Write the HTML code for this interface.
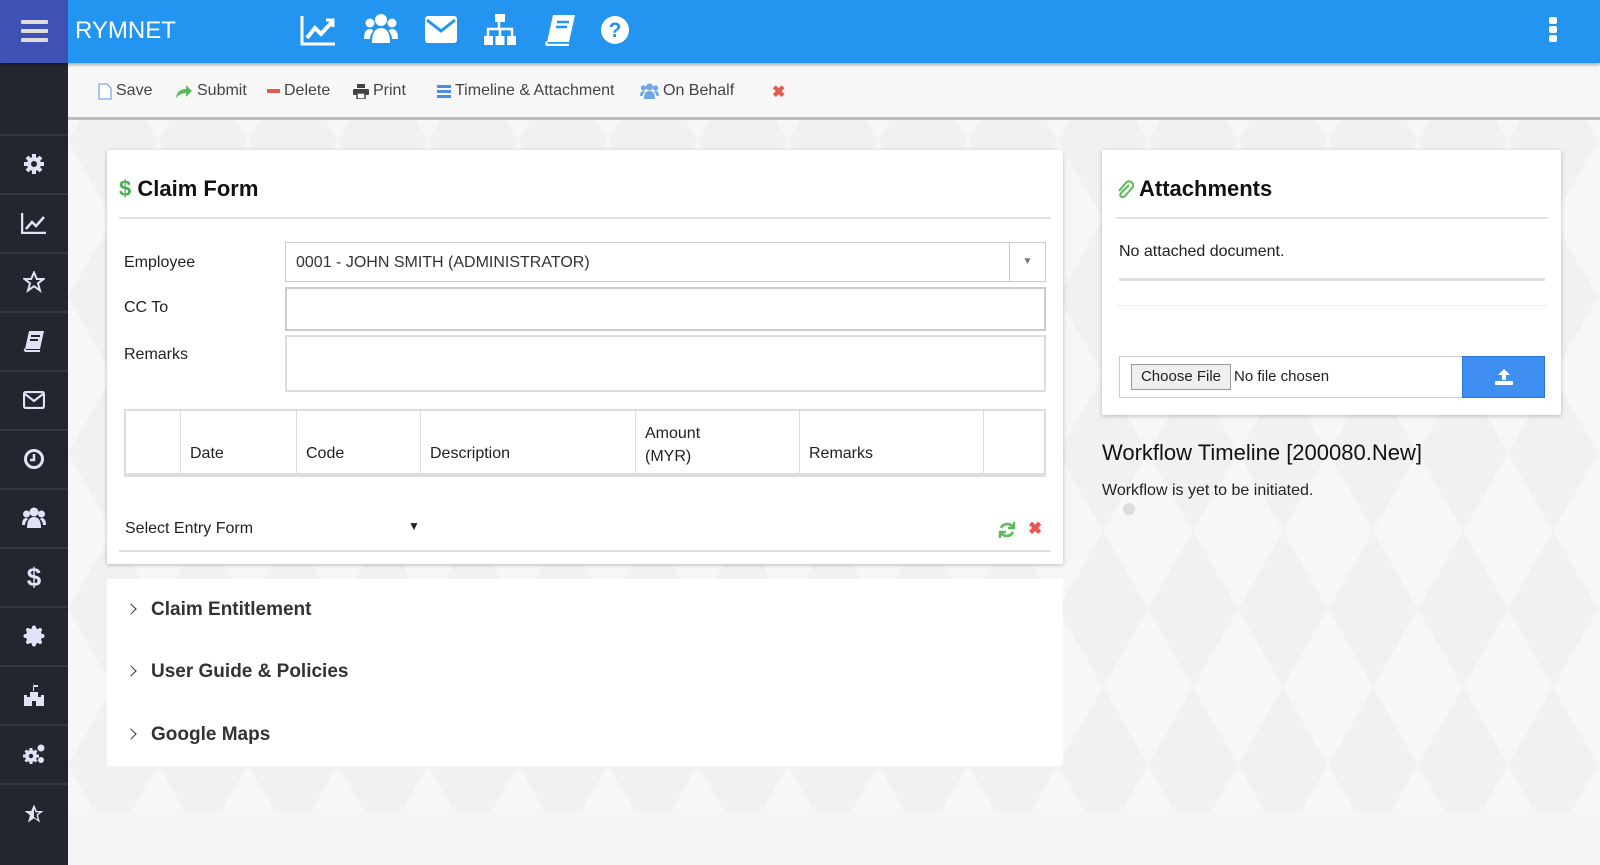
<!DOCTYPE html>
<html><head><meta charset="utf-8"><style>
*{box-sizing:border-box;margin:0;padding:0}
body{width:1600px;height:865px;overflow:hidden;background:#f5f5f5;font-family:"Liberation Sans",Arial,sans-serif;color:#222;position:relative}
.abs{position:absolute}
#hdr{left:0;top:0;width:1600px;height:63px;background:#2394ef;box-shadow:0 2px 3px rgba(0,0,0,.3);z-index:3}
#burger{left:0;top:0;width:68px;height:63px;background:#3f51b5}
#side{left:0;top:63px;width:68px;height:802px;background:#23262e;z-index:2}
.sitem{position:absolute;left:0;width:68px;height:58px;border-top:2px solid #33373f;display:flex;align-items:center;justify-content:center}
#bg{left:68px;top:63px;width:1532px;height:748px;background:#f1f1f1;
background-image:linear-gradient(60deg,rgba(255,255,255,.45) 25%,transparent 25%,transparent 75%,rgba(255,255,255,.45) 75%),linear-gradient(-60deg,rgba(255,255,255,.45) 25%,transparent 25%,transparent 75%,rgba(255,255,255,.45) 75%);background-size:90px 156px}
#tb{left:68px;top:63px;width:1532px;height:57px;background:#f7f7f7;border-bottom:3px solid #bdbdbd;font-size:16px;color:#444}
.tbi{position:absolute;top:19px;display:flex;align-items:center;gap:4px}
.card{background:#fff;box-shadow:0 1px 4px rgba(0,0,0,.25);border-radius:2px}
.lbl{position:absolute;font-size:16px;color:#222}
.inp{position:absolute;border:1px solid #ccc;background:#fff}
.chev{display:inline-block;width:8px;height:8px;border-right:1.5px solid #333;border-top:1.5px solid #333;transform:rotate(45deg);margin-right:16px;position:relative;top:-2px}
</style></head><body>
<div id="bg" class="abs"></div>
<div id="hdr" class="abs">
 <div id="burger" class="abs"><svg class="abs" style="left:21px;top:20px" width="27" height="22"><rect y="0" width="27" height="4" rx="1" fill="#ddd"/><rect y="9" width="27" height="4" rx="1" fill="#ddd"/><rect y="18" width="27" height="4" rx="1" fill="#ddd"/></svg></div>
 <div class="abs" style="left:75px;top:17px;font-size:24px;color:#fff">RYMNET</div>
 <svg class="abs" style="left:300px;top:14px" width="36" height="32" fill="none" stroke="#fff" stroke-width="3"><path d="M2 2V30H35"/><path d="M7 24L15 14L21 20L32 8" stroke-width="4"/><path d="M26 6H33V13" /></svg>
 <svg class="abs" style="left:364px;top:13px" width="34" height="32" fill="#fff"><circle cx="17" cy="7" r="6"/><circle cx="6" cy="10" r="4.5"/><circle cx="28" cy="10" r="4.5"/><path d="M8 30Q8 15 17 15Q26 15 26 30Z"/><path d="M0 26Q0 16 6 16Q9 16 9 18Q6 22 6 26Z"/><path d="M34 26Q34 16 28 16Q25 16 25 18Q28 22 28 26Z"/></svg>
 <svg class="abs" style="left:425px;top:16px" width="32" height="27"><rect width="32" height="27" rx="3" fill="#fff"/><path d="M2 4L16 15L30 4" fill="none" stroke="#2394ef" stroke-width="3"/></svg>
 <svg class="abs" style="left:484px;top:14px" width="32" height="32" fill="#fff"><rect x="11" y="0" width="10" height="8"/><rect x="0" y="22" width="9" height="9"/><rect x="11.5" y="22" width="9" height="9"/><rect x="23" y="22" width="9" height="9"/><path d="M15 8V15M4 22V15H28V22M16 15V22" stroke="#fff" stroke-width="2.5" fill="none"/></svg>
 <svg class="abs" style="left:544px;top:14px" width="32" height="32"><path d="M9 1H31L25 28H3Z" fill="#fff"/><path d="M3 28Q1 31 5 31H25" stroke="#fff" stroke-width="2.5" fill="none"/><path d="M13 8H25M12 13H23" stroke="#2394ef" stroke-width="2.5"/></svg>
 <svg class="abs" style="left:600px;top:15px" width="30" height="30"><circle cx="15" cy="15" r="14" fill="#fff"/><text x="15" y="22" text-anchor="middle" font-size="21" font-weight="bold" fill="#2394ef" font-family="Liberation Sans">?</text></svg>
 <svg class="abs" style="left:1549px;top:17px" width="9" height="26" fill="#fff"><rect y="0" width="8" height="7" rx="2"/><rect y="9" width="8" height="7" rx="2"/><rect y="18" width="8" height="7" rx="2"/></svg>
</div>
<div id="side" class="abs">
 <div class="sitem" style="top:71px"><svg width="22" height="22"><circle cx="11" cy="11" r="7" fill="#dfe3f5"/><g stroke="#dfe3f5" stroke-width="4"><path d="M11 1V21M1 11H21M4 4L18 18M18 4L4 18"/></g><circle cx="11" cy="11" r="3" fill="#23262e"/></svg></div>
 <div class="sitem" style="top:130px"><svg width="26" height="22" fill="none" stroke="#dfe3f5" stroke-width="2.5"><path d="M1 1V21H25"/><path d="M5 17L11 10L15 14L23 5"/></svg></div>
 <div class="sitem" style="top:189px"><svg width="22" height="22"><path d="M11 1.5L13.8 8H20.5L15 12.3L17 19.5L11 15.2L5 19.5L7 12.3L1.5 8H8.2Z" fill="none" stroke="#dfe3f5" stroke-width="2"/></svg></div>
 <div class="sitem" style="top:248px"><svg width="22" height="22"><path d="M6 1H21L17 19H2Z" fill="#dfe3f5"/><path d="M2 19Q1 21 4 21H17" stroke="#dfe3f5" stroke-width="2" fill="none"/><path d="M8 6H17M7 10H15" stroke="#23262e" stroke-width="2"/></svg></div>
 <div class="sitem" style="top:307px"><svg width="22" height="18"><rect x="1" y="1" width="20" height="16" rx="2" fill="none" stroke="#dfe3f5" stroke-width="2.2"/><path d="M2 3L11 10L20 3" fill="none" stroke="#dfe3f5" stroke-width="2.2"/></svg></div>
 <div class="sitem" style="top:366px"><svg width="22" height="22"><circle cx="11" cy="11" r="8.5" fill="none" stroke="#dfe3f5" stroke-width="3"/><path d="M11 6V12H7" fill="none" stroke="#dfe3f5" stroke-width="2.5"/></svg></div>
 <div class="sitem" style="top:425px"><svg width="24" height="22" fill="#dfe3f5"><circle cx="12" cy="5" r="4.5"/><circle cx="4.5" cy="7" r="3.5"/><circle cx="19.5" cy="7" r="3.5"/><path d="M5 21Q5 10 12 10Q19 10 19 21Z"/><path d="M0 18Q0 11 4.5 11L6 12Q3 15 3 18Z"/><path d="M24 18Q24 11 19.5 11L18 12Q21 15 21 18Z"/></svg></div>
 <div class="sitem" style="top:484px"><span style="color:#dfe3f5;font-size:26px;font-weight:bold">$</span></div>
 <div class="sitem" style="top:543px"><svg width="22" height="22"><circle cx="11" cy="11" r="8" fill="#dfe3f5"/><g fill="#dfe3f5"><circle cx="11" cy="2.5" r="2"/><circle cx="11" cy="19.5" r="2"/><circle cx="2.5" cy="11" r="2"/><circle cx="19.5" cy="11" r="2"/><circle cx="5" cy="5" r="2"/><circle cx="17" cy="17" r="2"/><circle cx="17" cy="5" r="2"/><circle cx="5" cy="17" r="2"/></g></svg></div>
 <div class="sitem" style="top:602px"><svg width="22" height="24" fill="#dfe3f5"><path d="M10 0V8H11V2H15V4H11"/><path d="M1 23V12H4V14H7V9H15V14H18V12H21V23H13V18H9V23Z"/></svg></div>
 <div class="sitem" style="top:661px"><svg width="24" height="22"><circle cx="9" cy="13" r="6" fill="#dfe3f5"/><g stroke="#dfe3f5" stroke-width="3"><path d="M9 5V21M1 13H17M3.5 7.5L14.5 18.5M14.5 7.5L3.5 18.5"/></g><circle cx="9" cy="13" r="2.2" fill="#23262e"/><circle cx="19" cy="5" r="3.5" fill="#dfe3f5"/><circle cx="19" cy="17" r="3" fill="#dfe3f5"/></svg></div>
 <div class="sitem" style="top:720px;height:82px;align-items:flex-start;padding-top:18px"><svg width="22" height="22"><path d="M11 1.5L13.8 8H20.5L15 12.3L17 19.5L11 15.2L5 19.5L7 12.3L1.5 8H8.2Z" fill="#dfe3f5"/><path d="M11 6V14L14.5 16.5L13.5 11.5L16.5 9.5H12.8Z" fill="#23262e"/></svg></div>
</div>
<div id="tb" class="abs">
 <div class="tbi" style="left:30px"><svg width="14" height="17"><path d="M1 1H9L13 5V16H1Z" fill="#fff" stroke="#7aa9e6" stroke-width="1.3"/></svg>Save</div>
 <div class="tbi" style="left:107px"><svg width="18" height="15"><path d="M1 14Q2 5 11 5V1L17 7L11 13V9Q5 9 1 14Z" fill="#5cb85c"/></svg>Submit</div>
 <div class="tbi" style="left:199px"><span style="display:inline-block;width:13px;height:4px;background:#e05a4e"></span>Delete</div>
 <div class="tbi" style="left:285px"><svg width="16" height="15" fill="#444"><rect x="4" y="0" width="8" height="4"/><rect x="0" y="5" width="16" height="6" rx="1"/><rect x="4" y="9" width="8" height="6" fill="#fff" stroke="#444" stroke-width="1.5"/></svg>Print</div>
 <div class="tbi" style="left:369px"><svg width="14" height="13" fill="#4a90e2"><rect y="0" width="14" height="3"/><rect y="5" width="14" height="3"/><rect y="10" width="14" height="3"/></svg>Timeline &amp; Attachment</div>
 <div class="tbi" style="left:572px"><svg width="19" height="16" fill="#6ea6e8"><circle cx="9.5" cy="4" r="3.5"/><circle cx="3.5" cy="5" r="2.7"/><circle cx="15.5" cy="5" r="2.7"/><path d="M4 16Q4 8 9.5 8Q15 8 15 16Z"/><path d="M0 13Q0 8 3.5 8L5 9Q2.5 11 2.5 13Z"/><path d="M19 13Q19 8 15.5 8L14 9Q16.5 11 16.5 13Z"/></svg>On Behalf</div>
 <div class="tbi" style="left:704px;color:#e8574c;font-weight:bold;font-size:16px">✖</div>
</div>

<div class="card abs" style="left:107px;top:150px;width:956px;height:414px">
 <div class="abs" style="left:12px;top:26px;font-size:22px;font-weight:bold;color:#111"><span style="color:#4caf50">$</span> Claim Form</div>
 <div class="abs" style="left:12px;top:67px;width:932px;height:2px;background:#e0e0e0"></div>
 <div class="lbl" style="left:17px;top:104px">Employee</div>
 <div class="inp" style="left:178px;top:92px;width:761px;height:40px;border-color:#ccc">
  <span class="abs" style="left:10px;top:11px;font-size:16px;color:#333">0001 - JOHN SMITH (ADMINISTRATOR)</span>
  <div class="abs" style="right:0;top:0;width:36px;height:38px;border-left:1px solid #ccc;color:#777;font-size:10px;text-align:center;line-height:38px">▼</div>
 </div>
 <div class="lbl" style="left:17px;top:149px">CC To</div>
 <div class="inp" style="left:178px;top:137px;width:761px;height:44px;border:2px solid #ccc"></div>
 <div class="lbl" style="left:17px;top:196px">Remarks</div>
 <div class="inp" style="left:178px;top:185px;width:761px;height:57px;border:2px solid #ddd"></div>
 <div class="abs" style="left:17px;top:259px;width:922px;height:68px;border:2px solid #ddd;border-bottom-width:4px;font-size:16px">
  <div class="abs" style="left:54px;top:0;width:1px;height:62px;background:#ddd"></div>
  <div class="abs" style="left:170px;top:0;width:1px;height:62px;background:#ddd"></div>
  <div class="abs" style="left:294px;top:0;width:1px;height:62px;background:#ddd"></div>
  <div class="abs" style="left:509px;top:0;width:1px;height:62px;background:#ddd"></div>
  <div class="abs" style="left:673px;top:0;width:1px;height:62px;background:#ddd"></div>
  <div class="abs" style="left:857px;top:0;width:1px;height:62px;background:#ddd"></div>
  <span class="abs" style="left:64px;top:34px">Date</span>
  <span class="abs" style="left:180px;top:34px">Code</span>
  <span class="abs" style="left:304px;top:34px">Description</span>
  <span class="abs" style="left:519px;top:11px;line-height:23px">Amount<br>(MYR)</span>
  <span class="abs" style="left:683px;top:34px">Remarks</span>
 </div>
 <div class="lbl" style="left:18px;top:370px">Select Entry Form</div>
 <div class="abs" style="left:301px;top:369px;font-size:12px">▼</div>
 <svg class="abs" style="left:891px;top:371px" width="18" height="18" fill="none" stroke="#5cb85c" stroke-width="2.6"><path d="M15 6A7 7 0 0 0 3 7"/><path d="M3 12A7 7 0 0 0 15 11"/><path d="M16 1V7H10" stroke-width="2.4"/><path d="M2 17V11H8" stroke-width="2.4"/></svg>
 <div class="abs" style="left:921px;top:369px;color:#f05050;font-size:17px;font-weight:bold">✖</div>
 <div class="abs" style="left:12px;top:400px;width:932px;height:2px;background:#e0e0e0"></div>
</div>

<div class="abs" style="left:107px;top:579px;width:956px;height:187px;background:#fff;font-size:19px;font-weight:bold;color:#333">
 <div class="abs" style="left:20px;top:20px"><span class="chev"></span>Claim Entitlement</div>
 <div class="abs" style="left:20px;top:82px"><span class="chev"></span>User Guide &amp; Policies</div>
 <div class="abs" style="left:20px;top:145px"><span class="chev"></span>Google Maps</div>
</div>

<div class="card abs" style="left:1102px;top:150px;width:459px;height:265px">
 <div class="abs" style="left:14px;top:26px;font-size:22px;font-weight:bold;color:#111;display:flex;align-items:center;gap:5px"><svg width="18" height="20" fill="none" stroke="#5cb85c" stroke-width="2"><path d="M13 6L5 14Q3 17 6 18Q8 19 10 16L16 9Q19 5 15 3Q12 1 9 5L3 12"/></svg>Attachments</div>
 <div class="abs" style="left:14px;top:67px;width:432px;height:2px;background:#e0e0e0"></div>
 <div class="abs" style="left:17px;top:93px;font-size:16px">No attached document.</div>
 <div class="abs" style="left:17px;top:128px;width:426px;height:3px;background:#e0e0e0"></div>
 <div class="abs" style="left:14px;top:155px;width:432px;height:1px;background:#eee"></div>
 <div class="abs" style="left:17px;top:206px;width:426px;height:42px;border:1px solid #ccc">
  <div class="abs" style="left:11px;top:7px;width:100px;height:26px;border:1px solid #999;background:#efefef;font-size:15px;text-align:center;line-height:24px">Choose File</div>
  <div class="abs" style="left:114px;top:11px;font-size:15px">No file chosen</div>
  <div class="abs" style="left:342px;top:-1px;width:83px;height:42px;background:#3f8ef2;border:1px solid #2b74d6"><svg class="abs" style="left:32px;top:12px" width="18" height="16" fill="#fff"><path d="M9 0L15 6H11V11H7V6H3Z"/><rect x="0" y="12" width="18" height="4" rx="1"/></svg></div>
 </div>
</div>
<div class="abs" style="left:1102px;top:440px;font-size:22px;color:#111">Workflow Timeline [200080.New]</div>
<div class="abs" style="left:1102px;top:482px;font-size:16px;color:#222">Workflow is yet to be initiated.</div>
<div class="abs" style="left:1123px;top:503px;width:12px;height:12px;border-radius:50%;background:#ddd"></div>
</body></html>
